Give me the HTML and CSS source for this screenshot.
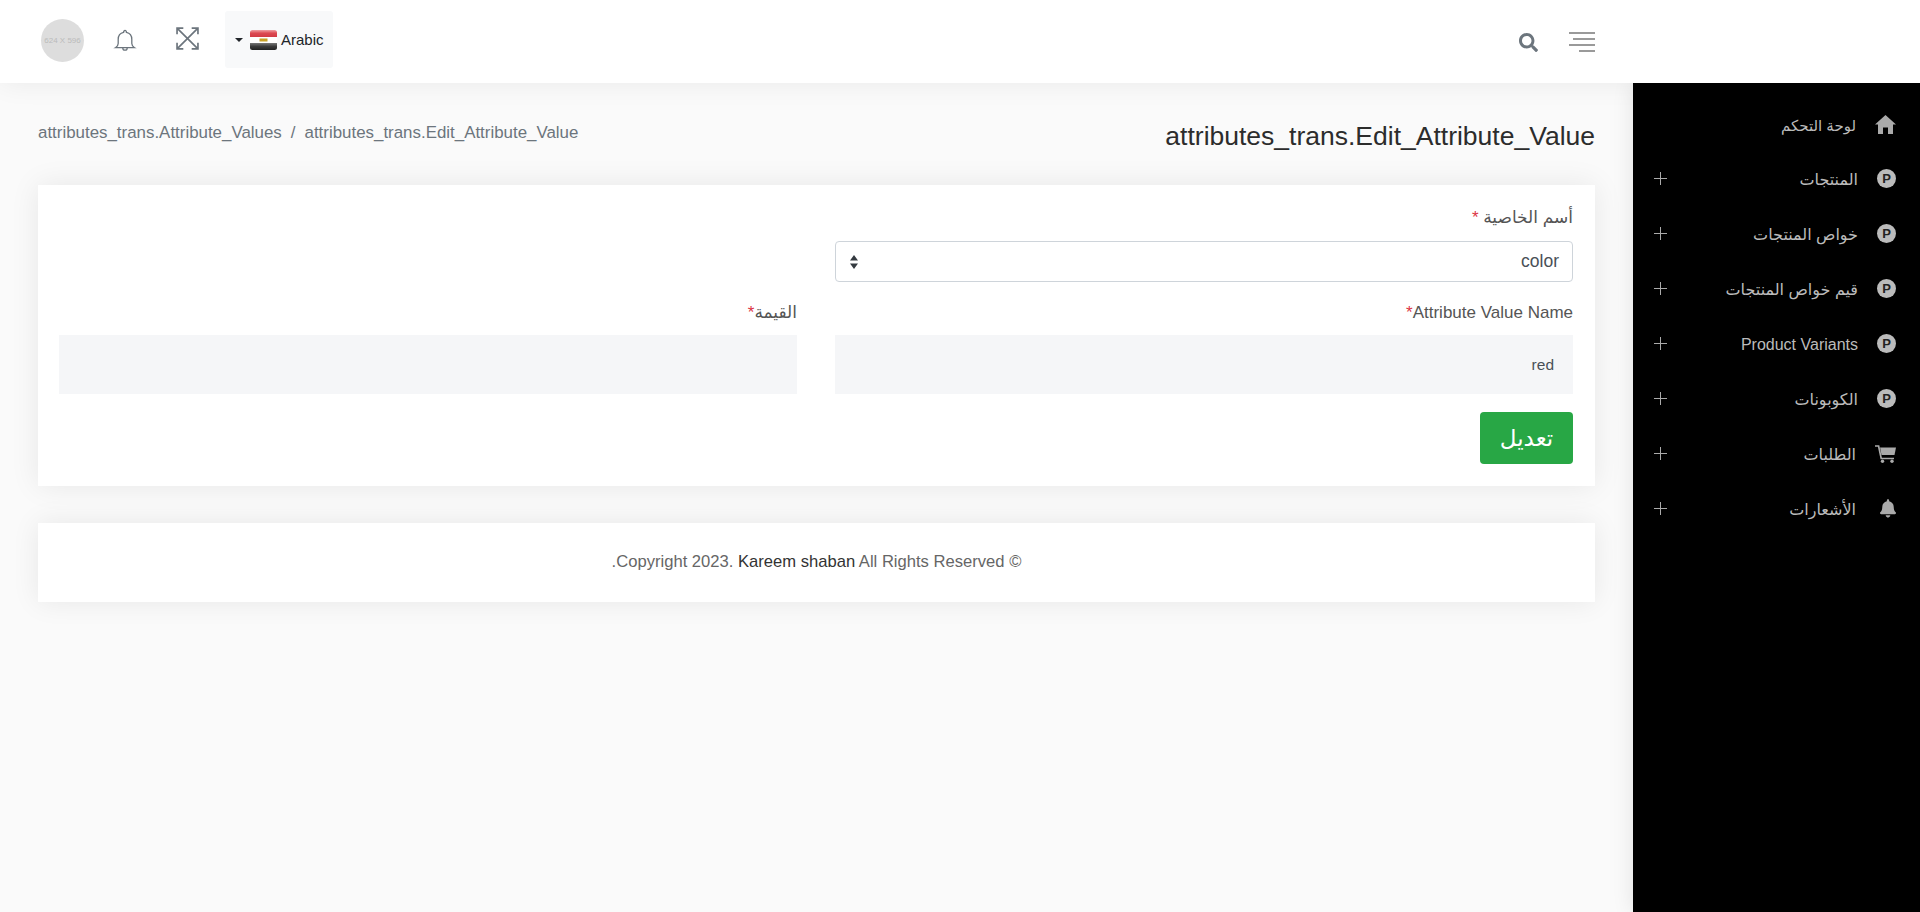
FILE: index.html
```html
<!DOCTYPE html>
<html lang="ar">
<head>
<meta charset="utf-8">
<title>attributes_trans.Edit_Attribute_Value</title>
<link rel="stylesheet" href="styles.css">
</head>
<body>
<header class="topbar">
  <div class="top-left">
    <div class="avatar">624 X 596</div>
    <svg class="ic-bell" viewBox="0 0 24 24" fill="none" stroke="#6c757d" stroke-width="1.3"><path d="M12 1.500a1.400 1.400 0 0 1 1.400 1.400v.5c3.400.7 5.400 3.600 5.400 7v4.200c0 1.800 1 3 2.700 4.100H2.500c1.700-1.100 2.700-2.300 2.700-4.100v-4.200c0-3.400 2-6.300 5.400-7v-.5A1.400 1.400 0 0 1 12 1.500z"/><path d="M9.800 19a2.200 2.200 0 0 0 4.400 0"/></svg>
    <svg class="ic-expand" viewBox="0 0 22 22" fill="none" stroke="#6c757d" stroke-width="1.6"><path d="M1.500 1.500l19 19M20.500 1.500l-19 19M1 7V1h6M15 1h6v6M1 15v6h6M21 15v6h-6"/></svg>
    <div class="lang">
      <span class="caret"></span>
      <svg class="flag" viewBox="0 0 27 20"><defs><clipPath id="fc"><rect width="27" height="20" rx="2.500"/></clipPath><linearGradient id="fr" x1="0" y1="0" x2="0" y2="1"><stop offset="0" stop-color="#f0a0a4"/><stop offset=".45" stop-color="#dc4a52"/><stop offset="1" stop-color="#d23a44"/></linearGradient><linearGradient id="fk" x1="0" y1="0" x2="0" y2="1"><stop offset="0" stop-color="#777"/><stop offset=".5" stop-color="#3a3a3a"/><stop offset="1" stop-color="#222"/></linearGradient></defs><g clip-path="url(#fc)"><rect width="27" height="7" fill="url(#fr)"/><rect y="7" width="27" height="6" fill="#fff"/><rect y="13" width="27" height="7" fill="url(#fk)"/><rect x="9.500" y="8.500" width="8" height="3" fill="#c9a227"/></g></svg>
      <span class="lang-name">Arabic</span>
    </div>
  </div>
  <div class="top-right">
    <svg class="ic-search" viewBox="0 0 512 512"><path fill="#6c757d" d="M505 442.700L405.300 343c-4.500-4.500-10.600-7-17-7H372c27.600-35.300 44-79.700 44-128C416 93.100 322.900 0 208 0S0 93.100 0 208s93.100 208 208 208c48.300 0 92.700-16.400 128-44v16.300c0 6.400 2.500 12.500 7 17l99.700 99.700c9.400 9.400 24.600 9.400 33.900 0l28.300-28.300c9.400-9.400 9.400-24.600.1-34zM208 336c-70.700 0-128-57.200-128-128 0-70.700 57.200-128 128-128 70.700 0 128 57.200 128 128 0 70.700-57.200 128-128 128z"/></svg>
    <div class="burger"><i class="b1"></i><i class="b2"></i><i class="b3"></i><i class="b4"></i></div>
  </div>
</header>
<div class="body-row">
  <main class="content">
    <div class="page-head">
      <div class="crumbs"><span>attributes_trans.Attribute_Values</span><span class="sep">/</span><span>attributes_trans.Edit_Attribute_Value</span></div>
      <h1 class="title">attributes_trans.Edit_Attribute_Value</h1>
    </div>
    <section class="card form-card" dir="rtl">
      <div class="field half">
        <label class="lbl">أسم الخاصية <b>*</b></label>
        <div class="select"><span>color</span><svg class="updown" viewBox="0 0 10 16"><path fill="#343a40" d="M5 1l4 5.500H1zM5 15L1 9.500h8z"/></svg></div>
      </div>
      <div class="two">
        <div class="field">
          <label class="lbl">Attribute Value Name<b>*</b></label>
          <input class="inp" value="red" dir="rtl">
        </div>
        <div class="field">
          <label class="lbl">القيمة<b>*</b></label>
          <input class="inp" dir="rtl">
        </div>
      </div>
      <button class="btn">تعديل</button>
    </section>
    <footer class="card foot">.Copyright 2023. <a>Kareem shaban</a> All Rights Reserved ©</footer>
  </main>
  <nav class="side" dir="rtl">
    <a class="item first"><svg class="ic home" viewBox="0 0 21 19"><path d="M10.500 0L21 9.500h-3V19h-5v-6.500H8V19H3V9.500H0z"/></svg><span class="t">لوحة التحكم</span></a>
    <a class="item"><span class="pc">P</span><span class="t">المنتجات</span><span class="plus"></span></a>
    <a class="item"><span class="pc">P</span><span class="t">خواص المنتجات</span><span class="plus"></span></a>
    <a class="item"><span class="pc">P</span><span class="t">قيم خواص المنتجات</span><span class="plus"></span></a>
    <a class="item"><span class="pc">P</span><span class="t">Product Variants</span><span class="plus"></span></a>
    <a class="item"><span class="pc">P</span><span class="t">الكوبونات</span><span class="plus"></span></a>
    <a class="item"><svg class="ic" viewBox="0 0 21 18"><path d="M5 2.500h16l-1.500 7.500H6.500z"/><path d="M0 1h3.600L6.200 13.500H19" fill="none" stroke="#aaa" stroke-width="1.700"/><circle cx="7.500" cy="16.300" r="1.700"/><circle cx="17" cy="16.300" r="1.700"/></svg><span class="t">الطلبات</span><span class="plus"></span></a>
    <a class="item"><svg class="ic bell2" viewBox="0 0 448 512"><path d="M224 512c35.300 0 64-28.700 64-64H160c0 35.300 28.700 64 64 64zm215.400-149.700c-19.300-20.800-55.500-52-55.500-154.300 0-77.700-54.500-139.900-127.900-155.200V32c0-17.700-14.300-32-32-32s-32 14.300-32 32v20.800C118.600 68.100 64.100 130.300 64.100 208c0 102.300-36.200 133.500-55.500 154.300-6 6.400-8.700 14.100-8.600 21.700.1 16.400 13 32 32.100 32h383.800c19.100 0 32-15.600 32.100-32 .1-7.600-2.600-15.300-8.600-21.700z"/></svg><span class="t">الأشعارات</span><span class="plus"></span></a>
  </nav>
</div>
</body>
</html>
```
FILE: styles.css
```css
* { box-sizing: border-box; }
html, body { margin: 0; height: 100%; }
body { background: #fafafa; font-family: "Liberation Sans", "DejaVu Sans", sans-serif; color: #555; overflow: hidden; }

.topbar { position: relative; z-index: 2; height: 83px; background: #fff; display: flex; justify-content: space-between; align-items: center; padding: 0 325px 0 41px; box-shadow: 0 0 28px rgba(0,0,0,.07); }
.top-left { display: flex; align-items: center; }
.avatar { width: 43px; height: 43px; margin-top: -2px; border-radius: 50%; background: #ddd; color: #bbb; font-size: 8px; display: flex; align-items: center; justify-content: center; }
.ic-bell { width: 24px; height: 24px; margin-left: 29px; margin-top: -2px; }
.ic-expand { width: 23px; height: 23px; margin-left: 39px; margin-top: -6px; }
.lang { display: flex; align-items: center; height: 57px; width: 108px; margin-left: 26px; margin-top: -4px; padding-left: 10px; background: #f8f9fa; border-radius: 3px; }
.caret { width: 0; height: 0; border: 4px solid transparent; border-top-color: #212529; border-bottom: 0; }
.flag { width: 27px; height: 20px; margin-left: 7px; }
.lang-name { margin-left: 4px; font-size: 15px; color: #212529; }
.top-right { display: flex; align-items: center; gap: 31px; }
.ic-search { width: 19px; height: 19px; margin-top: 2px; }
.burger { width: 26px; height: 20px; display: flex; flex-direction: column; justify-content: space-between; align-items: flex-end; }
.burger i { display: block; height: 2px; background: #9a9a9a; }
.b1 { width: 26px; } .b2 { width: 22px; } .b3 { width: 26px; } .b4 { width: 16px; }

.body-row { display: flex; height: 829px; }
.content { flex: 1; padding: 0 38px; min-width: 0; }
.page-head { display: flex; justify-content: space-between; height: 102px; padding-top: 38px; }
.crumbs { font-size: 16.900px; color: #6c757d; display: flex; gap: 9px; line-height: 24px; }
.title { margin: 0; font-size: 26.500px; font-weight: 400; color: #2c2c2c; line-height: 30px; }
.card { background: #fff; box-shadow: 0 0 28px rgba(0,0,0,.08); }
.form-card { height: 301px; padding: 21px 22px 0 21px; }
.field.half { width: 738px; }
.lbl { display: block; font-size: 17px; line-height: 22px; padding-top: 1px; height: 23px; color: #555; }
.lbl b { color: #dc3545; font-weight: 400; }
.select { margin-top: 12px; height: 41px; border: 1px solid #ced4da; border-radius: 4px; display: flex; justify-content: space-between; align-items: center; padding: 0 13px; font-size: 17.500px; color: #495057; background: #fff; }
.updown { width: 10px; height: 16px; }
.two { display: flex; gap: 38px; margin-top: 19px; }
.two .field { flex: 1; }
.inp { display: block; width: 100%; height: 59px; margin-top: 11px; background: #f5f6f8; border: 0; padding: 0 19px; font: 15.500px "Liberation Sans", sans-serif; color: #495057; outline: 0; }
.btn { display: block; margin-top: 18px; width: 93px; height: 52px; background: #28a745; border: 0; border-radius: 4px; color: #fff; font-size: 23px; font-family: inherit; }
.foot { height: 79px; margin-top: 37px; display: block; text-align: center; font-size: 16.600px; line-height: 77px; color: #666; }
.foot a { color: #333; }

.side { width: 287px; background: #000; display: flex; flex-direction: column; padding-top: 15px; box-shadow: 0 0 20px rgba(0,0,0,.1); position: relative; z-index: 1; }
.item { height: 55px; display: flex; align-items: center; padding-right: 24px; color: #bbb; font-size: 16px; position: relative; }
.item.first { height: 53px; font-size: 15px; }
.ic { width: 21px; height: 18px; fill: #aaa; flex: none; }
.home { height: 19px; }
.bell2 { width: 16px; height: 19px; margin-left: 5px; }
.pc { width: 19px; height: 19px; border-radius: 50%; background: #bbb; color: #222; font-size: 13px; font-weight: 700; display: flex; align-items: center; justify-content: center; flex: none; }
.t { margin-right: 19px; padding-top: 2px; }
.plus { position: absolute; left: 21px; top: 21px; width: 13px; height: 13px; background: linear-gradient(#aaa,#aaa) center/13px 1px no-repeat, linear-gradient(#aaa,#aaa) center/1px 13px no-repeat; }
```
